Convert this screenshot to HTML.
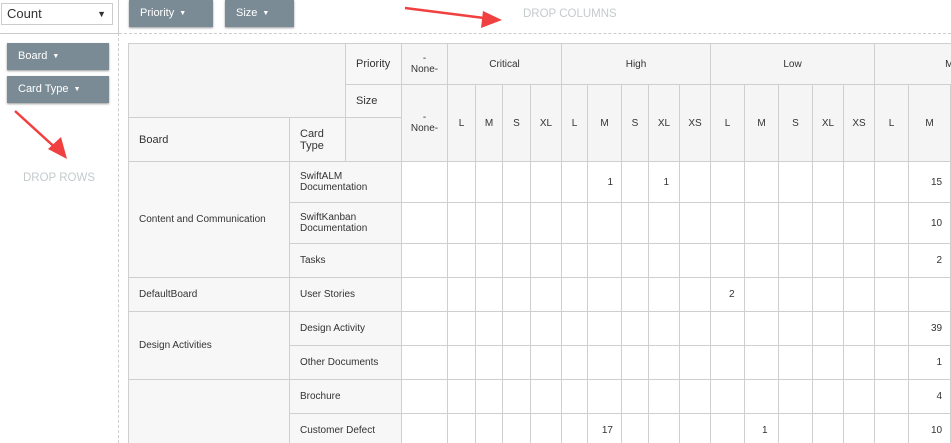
<!DOCTYPE html>
<html><head><style>
body{margin:0;width:951px;height:443px;overflow:hidden;background:#fff;font-family:"Liberation Sans",sans-serif;position:relative;color:#333}
.sel{position:absolute;left:1px;top:3px;border:1px solid #ccc;font-size:13px;line-height:20px;padding-left:5px;box-sizing:border-box;width:112px;height:22px}
.sel span{position:absolute;right:6px;top:0;font-size:9px}
.btn{position:absolute;background:#7b8b95;color:#fff;font-size:11px;line-height:27px;height:27px;box-sizing:border-box;padding-left:11px;box-shadow:0 1px 2px rgba(0,0,0,.4)}
.btn i{font-style:normal;font-size:7px;margin-left:5px;vertical-align:1px}
.drop{position:absolute;color:#c5cacd;font-size:11.5px}
.wrap{position:absolute;left:128px;top:43px;width:823px;height:400px;overflow:hidden}
table{border-collapse:collapse;table-layout:fixed;font-size:10px;width:862px}
td{border:1px solid #cfcfcf;padding:0;text-align:center;background:#f5f5f5;overflow:hidden}
td.l{text-align:left;padding-left:10px;background:#f7f7f7}
td.h{font-size:11px}
td.d{background:#fff;text-align:right;padding-right:8px}
</style></head><body>
<div style="position:absolute;left:0;top:33px;width:118px;border-top:1px solid #ccc"></div>
<div style="position:absolute;left:118px;top:0;height:33px;border-left:1px solid #ccc"></div>
<div style="position:absolute;left:118px;top:33px;height:410px;border-left:1px dashed #ccc"></div>
<div style="position:absolute;left:119px;top:33px;width:832px;border-top:1px dashed #ccc"></div>
<div class="sel">Count<span>▼</span></div>
<div class="btn" style="left:129px;top:0;width:84px">Priority<i>▼</i></div>
<div class="btn" style="left:225px;top:0;width:69px">Size<i>▼</i></div>
<div class="btn" style="left:7px;top:43px;width:102px">Board<i>▼</i></div>
<div class="btn" style="left:7px;top:76px;width:102px">Card Type<i>▼</i></div>
<div class="drop" style="left:523px;top:8px">DROP COLUMNS</div>
<div class="drop" style="left:23px;top:172px">DROP ROWS</div>
<svg style="position:absolute;left:0;top:0" width="951" height="443">
<line x1="405" y1="8" x2="492" y2="19" stroke="#f04040" stroke-width="2.5"/>
<polygon points="502,20 483,11 481,28" fill="#f04040"/>
<line x1="15" y1="111" x2="60" y2="152" stroke="#f04040" stroke-width="2.5"/>
<polygon points="67,159 48,149 61,137" fill="#f04040"/>
</svg>
<div class="wrap"><table>
<colgroup><col style="width:161px"><col style="width:56px"><col style="width:56px"><col style="width:46px"><col style="width:28px"><col style="width:27px"><col style="width:28px"><col style="width:31px"><col style="width:26px"><col style="width:34px"><col style="width:27px"><col style="width:31px"><col style="width:31px"><col style="width:34px"><col style="width:34px"><col style="width:34px"><col style="width:31px"><col style="width:31px"><col style="width:34px"><col style="width:42px"><col style="width:40px"></colgroup>
<tr style="height:41px"><td colspan="2" rowspan="2"></td><td class="l h" style="padding-left:10px">Priority</td><td>-<br>None-</td><td colspan="4">Critical</td><td colspan="5">High</td><td colspan="5">Low</td><td colspan="3" style="text-align:left;padding-left:70px">M</td></tr>
<tr style="height:33px"><td class="l h" style="vertical-align:top;padding-top:10px">Size</td><td rowspan="2">-<br>None-</td><td rowspan="2">L</td><td rowspan="2">M</td><td rowspan="2">S</td><td rowspan="2">XL</td><td rowspan="2">L</td><td rowspan="2">M</td><td rowspan="2">S</td><td rowspan="2">XL</td><td rowspan="2">XS</td><td rowspan="2">L</td><td rowspan="2">M</td><td rowspan="2">S</td><td rowspan="2">XL</td><td rowspan="2">XS</td><td rowspan="2">L</td><td rowspan="2">M</td><td rowspan="2"></td></tr>
<tr style="height:44px"><td class="l h">Board</td><td class="l h">Card<br>Type</td><td></td></tr>
<tr style="height:41px"><td class="l" rowspan="3">Content and Communication</td><td class="l" colspan="2">SwiftALM<br>Documentation</td><td class="d"></td><td class="d"></td><td class="d"></td><td class="d"></td><td class="d"></td><td class="d"></td><td class="d">1</td><td class="d"></td><td class="d" style="padding-right:10px">1</td><td class="d"></td><td class="d"></td><td class="d"></td><td class="d"></td><td class="d"></td><td class="d"></td><td class="d"></td><td class="d">15</td><td class="d"></td></tr>
<tr style="height:41px"><td class="l" colspan="2">SwiftKanban<br>Documentation</td><td class="d"></td><td class="d"></td><td class="d"></td><td class="d"></td><td class="d"></td><td class="d"></td><td class="d"></td><td class="d"></td><td class="d"></td><td class="d"></td><td class="d"></td><td class="d"></td><td class="d"></td><td class="d"></td><td class="d"></td><td class="d"></td><td class="d">10</td><td class="d"></td></tr>
<tr style="height:34px"><td class="l" colspan="2">Tasks</td><td class="d"></td><td class="d"></td><td class="d"></td><td class="d"></td><td class="d"></td><td class="d"></td><td class="d"></td><td class="d"></td><td class="d"></td><td class="d"></td><td class="d"></td><td class="d"></td><td class="d"></td><td class="d"></td><td class="d"></td><td class="d"></td><td class="d">2</td><td class="d"></td></tr>
<tr style="height:34px"><td class="l">DefaultBoard</td><td class="l" colspan="2">User Stories</td><td class="d"></td><td class="d"></td><td class="d"></td><td class="d"></td><td class="d"></td><td class="d"></td><td class="d"></td><td class="d"></td><td class="d"></td><td class="d"></td><td class="d" style="text-align:left;padding-left:18px">2</td><td class="d"></td><td class="d"></td><td class="d"></td><td class="d"></td><td class="d"></td><td class="d"></td><td class="d"></td></tr>
<tr style="height:34px"><td class="l" rowspan="2">Design Activities</td><td class="l" colspan="2">Design Activity</td><td class="d"></td><td class="d"></td><td class="d"></td><td class="d"></td><td class="d"></td><td class="d"></td><td class="d"></td><td class="d"></td><td class="d"></td><td class="d"></td><td class="d"></td><td class="d"></td><td class="d"></td><td class="d"></td><td class="d"></td><td class="d"></td><td class="d">39</td><td class="d"></td></tr>
<tr style="height:34px"><td class="l" colspan="2">Other Documents</td><td class="d"></td><td class="d"></td><td class="d"></td><td class="d"></td><td class="d"></td><td class="d"></td><td class="d"></td><td class="d"></td><td class="d"></td><td class="d"></td><td class="d"></td><td class="d"></td><td class="d"></td><td class="d"></td><td class="d"></td><td class="d"></td><td class="d">1</td><td class="d"></td></tr>
<tr style="height:34px"><td class="l" rowspan="2"></td><td class="l" colspan="2">Brochure</td><td class="d"></td><td class="d"></td><td class="d"></td><td class="d"></td><td class="d"></td><td class="d"></td><td class="d"></td><td class="d"></td><td class="d"></td><td class="d"></td><td class="d"></td><td class="d"></td><td class="d"></td><td class="d"></td><td class="d"></td><td class="d"></td><td class="d">4</td><td class="d"></td></tr>
<tr style="height:34px"><td class="l" colspan="2">Customer Defect</td><td class="d"></td><td class="d"></td><td class="d"></td><td class="d"></td><td class="d"></td><td class="d"></td><td class="d">17</td><td class="d"></td><td class="d"></td><td class="d"></td><td class="d"></td><td class="d" style="text-align:left;padding-left:17px">1</td><td class="d"></td><td class="d"></td><td class="d"></td><td class="d"></td><td class="d">10</td><td class="d"></td></tr>
</table></div>
</body></html>
